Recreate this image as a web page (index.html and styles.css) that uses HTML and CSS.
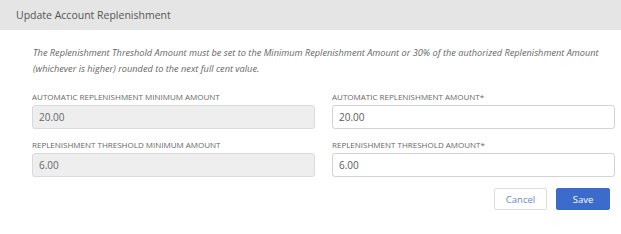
FILE: index.html
```html
<!DOCTYPE html>
<html lang="en">
<head>
    <meta charset="UTF-8">
    <title>Update Account Replenishment</title>
    <link rel="stylesheet" href="styles.css">
</head>
<body>
    <div class="modal">
        <div class="modal-header">Update Account Replenishment</div>
        <div class="modal-body">
            <p class="note">The Replenishment Threshold Amount must be set to the Minimum Replenishment Amount or 30% of the authorized Replenishment Amount (whichever is higher) rounded to the next full cent value.</p>

            <div class="fields">
                <div class="form-group">
                    <label for="autoMin">Automatic Replenishment Minimum Amount</label>
                    <input type="text" id="autoMin" value="20.00" disabled>
                </div>
                <div class="form-group">
                    <label for="autoAmount">Automatic Replenishment Amount*</label>
                    <input type="text" id="autoAmount" value="20.00">
                </div>
                <div class="form-group">
                    <label for="thresholdMin">Replenishment Threshold Minimum Amount</label>
                    <input type="text" id="thresholdMin" value="6.00" disabled>
                </div>
                <div class="form-group">
                    <label for="thresholdAmount">Replenishment Threshold Amount*</label>
                    <input type="text" id="thresholdAmount" value="6.00">
                </div>
            </div>

            <div class="actions">
                <button type="button" class="btn btn-cancel">Cancel</button>
                <button type="button" class="btn btn-save">Save</button>
            </div>
        </div>
    </div>
</body>
</html>
```

FILE: styles.css
```css
body {
    margin: 0;
    font-family: "Open Sans", Arial, sans-serif;
    background: white;
    color: #555;
}
.modal-header {
    height: 30px;
    line-height: 30px;
    padding-left: 16px;
    background: #e5e5e5;
    font-size: 10.5px;
    color: #555;
}
.modal-body {
    padding: 15px 6px 0 32px;
}
.note {
    margin: 0 0 15px 1px;
    font-size: 9.2px;
    font-style: italic;
    line-height: 16px;
    color: #666;
}
.fields {
    display: grid;
    grid-template-columns: 283px 283px;
    column-gap: 17px;
    row-gap: 11px;
}
label {
    display: block;
    font-size: 8px;
    line-height: 10px;
    text-transform: uppercase;
    color: #666;
    margin-bottom: 3px;
}
input[type="text"] {
    display: block;
    box-sizing: border-box;
    width: 100%;
    height: 24px;
    padding: 0 6px;
    border: 1px solid #d4d4d4;
    border-radius: 3px;
    font-family: "Open Sans", Arial, sans-serif;
    font-size: 10px;
    color: #5a5a5a;
    background: white;
}
input[type="text"]:disabled {
    background: #eee;
    border-color: #dadada;
    color: #666;
}
.actions {
    display: flex;
    justify-content: flex-end;
    gap: 9px;
    margin-top: 11px;
    margin-right: 5px;
}
.btn {
    height: 22px;
    padding: 0;
    border-radius: 2px;
    font-family: "Open Sans", Arial, sans-serif;
    font-size: 9.5px;
    cursor: pointer;
}
.btn-cancel {
    width: 53px;
    background: white;
    border: 1px solid #ddd;
    color: #6a88cc;
}
.btn-save {
    width: 54px;
    background: #3b6bcb;
    border: 1px solid #3b6bcb;
    color: white;
}
```
